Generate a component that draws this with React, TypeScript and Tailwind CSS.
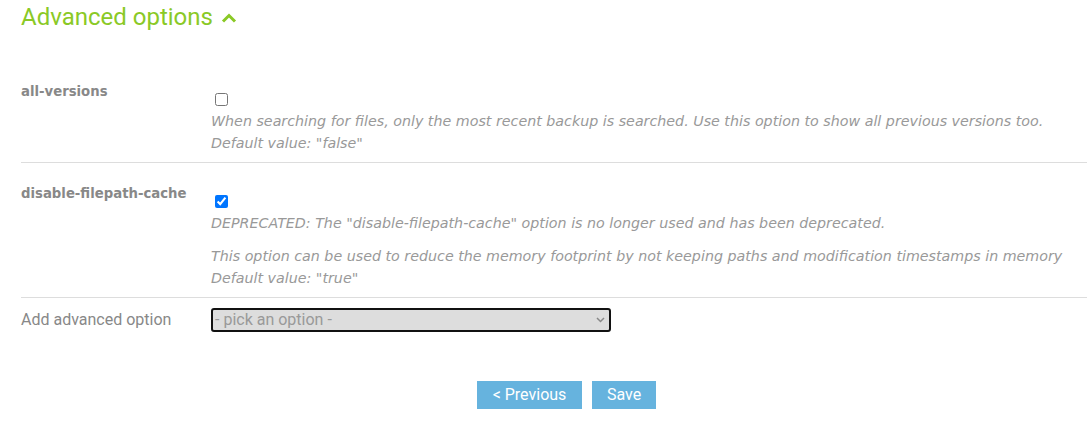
import React from "react";

const cond = { fontFamily: 'Roboto, "Liberation Sans", sans-serif' };
const dv = { fontFamily: '"DejaVu Sans", Verdana, sans-serif' };

function Row({ label, checked, children }: { label: string; checked: boolean; children: React.ReactNode }) {
  return (
    <div className="flex border-b border-[#dddddd] pt-[18px] pb-[8px]">
      <div className="w-[190px] shrink-0 text-[13.25px] font-bold text-[#888888] pt-[3px]" style={dv}>
        {label}
      </div>
      <div className="flex-1 pt-[14px]">
        <input
          type="checkbox"
          defaultChecked={checked}
          className="ml-[4px] block w-[13px] h-[13px] m-0 accent-[#0075ff]"
        />
        <div className="mt-[4px] text-[14.25px] italic text-[#999999] leading-[22px]" style={dv}>
          {children}
        </div>
      </div>
    </div>
  );
}

export default function App() {
  return (
    <div className="bg-white w-[1087px] h-[424px] overflow-hidden pl-[21px]">
      <div className="flex items-center pt-[4px] h-[30px]" style={cond}>
        <span className="text-[24px] text-[#8ac926] leading-[30px]">Advanced options</span>
        <svg className="ml-[8px] mt-[1px]" width="16" height="12" viewBox="0 0 16 12">
          <path d="M2 9.5 L8 3.5 L14 9.5" fill="none" stroke="#8ac926" strokeWidth="3" />
        </svg>
      </div>
      <div className="mt-[31px]">
        <Row label="all-versions" checked={false}>
          <div>When searching for files, only the most recent backup is searched. Use this option to show all previous versions too.</div>
          <div>Default value: "false"</div>
        </Row>
        <Row label="disable-filepath-cache" checked={true}>
          <div className="mb-[11px]">DEPRECATED: The "disable-filepath-cache" option is no longer used and has been deprecated.</div>
          <div>This option can be used to reduce the memory footprint by not keeping paths and modification timestamps in memory</div>
          <div>Default value: "true"</div>
        </Row>
        <div className="flex items-center pt-[11px]" style={cond}>
          <div className="w-[190px] shrink-0 text-[16px] text-[#888888] -mt-[2px]">Add advanced option</div>
          <div className="relative w-[400px] h-[24px] bg-[#dddddd] border-2 border-[#111111] rounded-[3px] flex items-center -mt-[1px]">
            <span className="pl-[2px] text-[16px] text-[#999999] leading-none">- pick an option -</span>
            <svg className="absolute right-[4px] top-[7px]" width="9" height="6" viewBox="0 0 9 6">
              <path d="M1 1 L4.5 4.5 L8 1" fill="none" stroke="#888888" strokeWidth="1.5" />
            </svg>
          </div>
        </div>
        <div className="flex justify-center gap-[10px] mt-[49px] pl-[25px]" style={cond}>
          <button className="h-[28px] w-[105px] bg-[#66b3de] text-white text-[16px] leading-[28px]">&lt; Previous</button>
          <button className="h-[28px] w-[64px] bg-[#66b3de] text-white text-[16px] leading-[28px]">Save</button>
        </div>
      </div>
    </div>
  );
}
